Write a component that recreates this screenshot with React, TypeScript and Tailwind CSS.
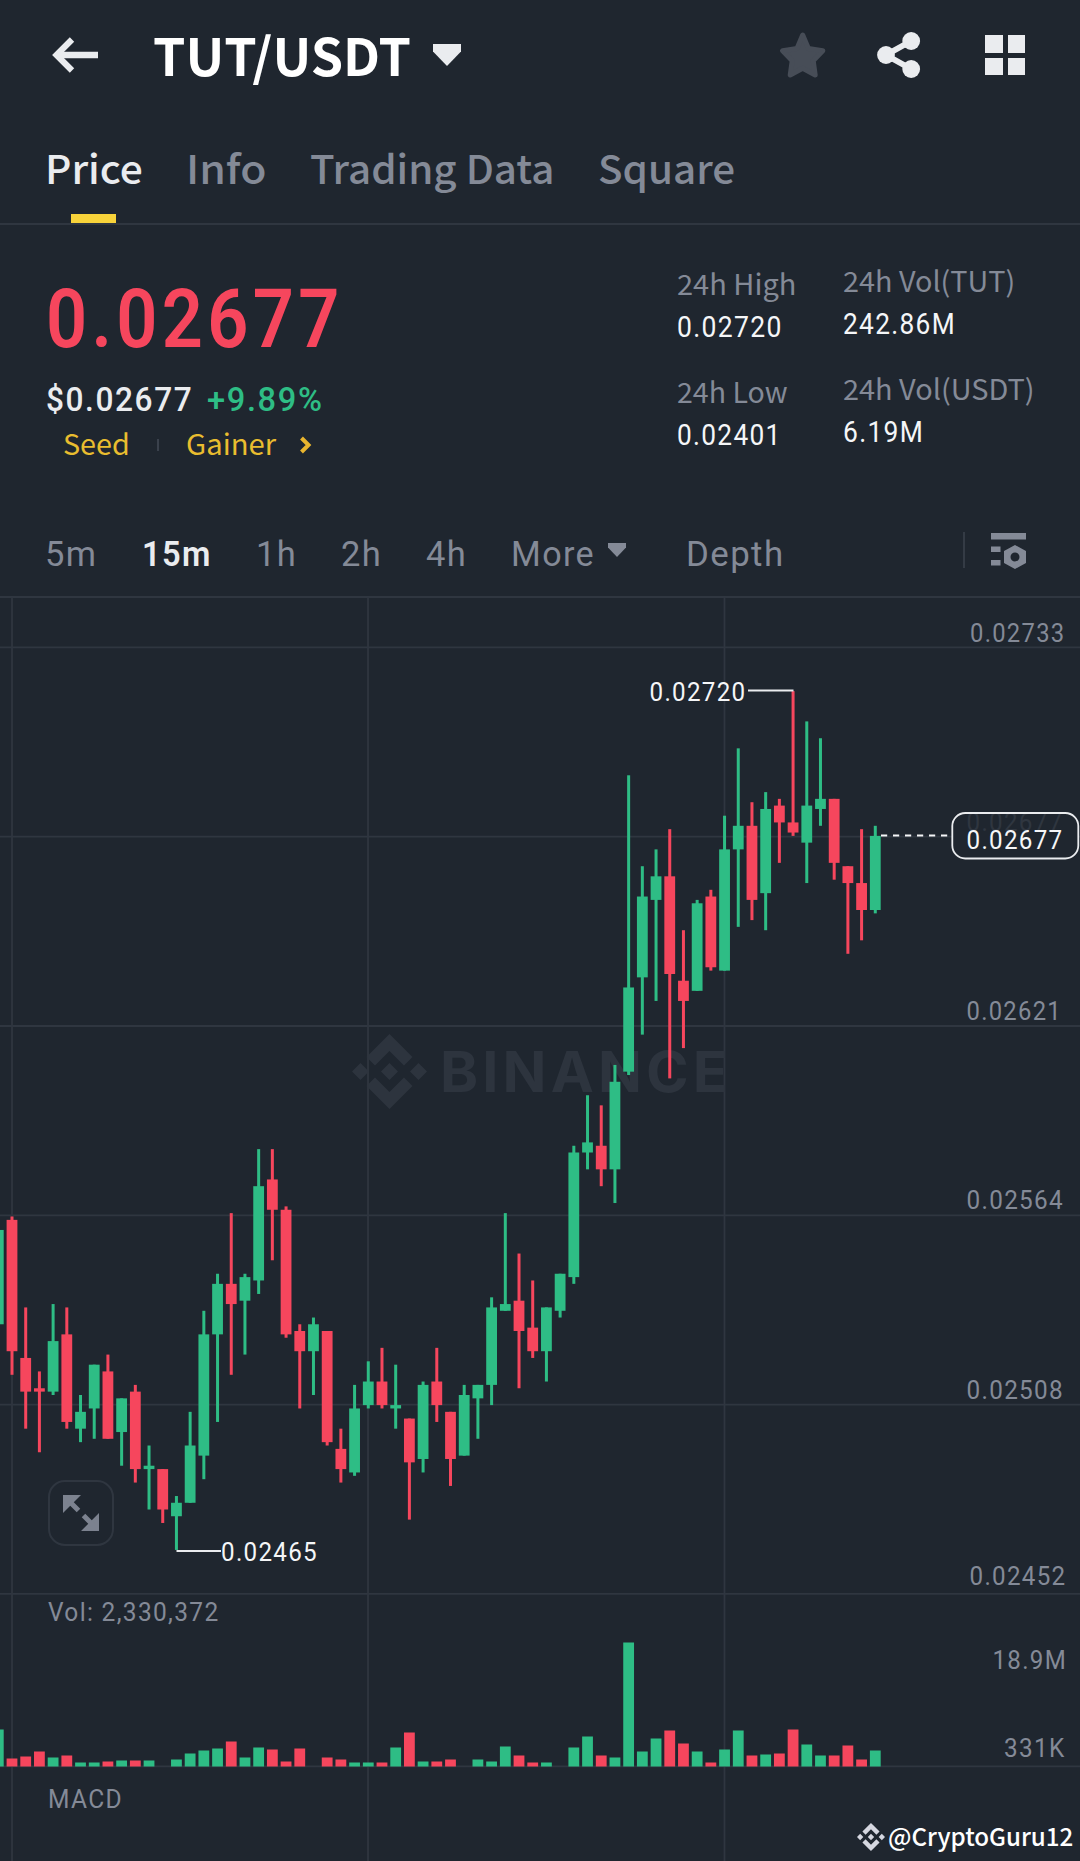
import { FC, ReactNode, useLayoutEffect, useRef, useState } from 'react';
import { SiBinance } from 'react-icons/si';

type Side = 'G' | 'R';
// side, high, body top, body bottom, low (price * 100000), volume bar height
type Candle = [Side, number, number, number, number, number];

const CANDLES: Candle[] = [
  ['G', 2560, 2560, 2532, 2532, 37],
  ['R', 2564, 2563, 2524, 2517, 8],
  ['R', 2537, 2522, 2512, 2501, 10],
  ['R', 2518, 2513, 2512, 2494, 15],
  ['G', 2538, 2527, 2512, 2511, 9],
  ['R', 2537, 2529, 2503, 2501, 11],
  ['G', 2511, 2506, 2501, 2497, 4],
  ['G', 2520, 2520, 2507, 2498, 4],
  ['R', 2523, 2518, 2498, 2498, 5],
  ['G', 2510, 2510, 2500, 2490, 6],
  ['R', 2514, 2512, 2489, 2485, 6],
  ['G', 2496, 2490, 2489, 2477, 6],
  ['R', 2489, 2489, 2477, 2473, 0],
  ['G', 2481, 2479, 2475, 2465, 7],
  ['G', 2506, 2496, 2479, 2479, 13],
  ['G', 2536, 2529, 2493, 2486, 16],
  ['G', 2547, 2544, 2529, 2503, 18],
  ['R', 2565, 2544, 2538, 2517, 25],
  ['G', 2547, 2546, 2539, 2523, 9],
  ['G', 2584, 2573, 2545, 2541, 19],
  ['R', 2584, 2575, 2566, 2551, 17],
  ['R', 2567, 2566, 2529, 2528, 5],
  ['R', 2532, 2530, 2524, 2507, 18],
  ['G', 2534, 2532, 2524, 2511, 0],
  ['R', 2530, 2530, 2497, 2496, 9],
  ['R', 2501, 2495, 2489, 2485, 7],
  ['G', 2514, 2507, 2488, 2487, 4],
  ['G', 2521, 2515, 2508, 2507, 4],
  ['R', 2525, 2515, 2508, 2507, 4],
  ['G', 2520, 2508, 2507, 2501, 19],
  ['R', 2504, 2504, 2491, 2474, 34],
  ['G', 2515, 2514, 2492, 2488, 5],
  ['R', 2525, 2515, 2508, 2503, 5],
  ['R', 2506, 2506, 2492, 2484, 7],
  ['G', 2514, 2511, 2493, 2493, 0],
  ['G', 2514, 2514, 2510, 2498, 7],
  ['G', 2540, 2537, 2514, 2508, 5],
  ['G', 2565, 2538, 2536, 2536, 20],
  ['R', 2553, 2539, 2530, 2513, 11],
  ['R', 2545, 2531, 2524, 2522, 4],
  ['G', 2537, 2537, 2524, 2515, 4],
  ['G', 2547, 2547, 2536, 2534, 0],
  ['G', 2585, 2583, 2546, 2544, 19],
  ['G', 2600, 2586, 2583, 2578, 30],
  ['R', 2597, 2585, 2578, 2573, 11],
  ['G', 2609, 2604, 2578, 2568, 9],
  ['G', 2695, 2632, 2607, 2606, 124],
  ['G', 2668, 2659, 2635, 2618, 15],
  ['G', 2673, 2665, 2658, 2628, 28],
  ['R', 2679, 2665, 2636, 2605, 36],
  ['R', 2649, 2634, 2628, 2614, 23],
  ['G', 2658, 2657, 2631, 2631, 15],
  ['R', 2661, 2659, 2638, 2637, 4],
  ['G', 2683, 2673, 2637, 2637, 17],
  ['G', 2703, 2680, 2673, 2650, 36],
  ['R', 2687, 2680, 2658, 2652, 11],
  ['G', 2690, 2685, 2660, 2649, 12],
  ['R', 2688, 2686, 2681, 2669, 13],
  ['R', 2720, 2681, 2678, 2677, 37],
  ['G', 2711, 2686, 2675, 2663, 22],
  ['G', 2706, 2688, 2685, 2680, 11],
  ['R', 2688, 2688, 2669, 2664, 11],
  ['R', 2668, 2668, 2663, 2642, 21],
  ['R', 2679, 2663, 2655, 2646, 7],
  ['G', 2680, 2677, 2655, 2654, 16],
];

const AXIS_LABELS = [
  { text: '0.02733', x: 970, y: 641.7, w: 95.5 },
  { text: '0.02621', x: 966.5, y: 1019.7, w: 95.5 },
  { text: '0.02564', x: 966.5, y: 1209, w: 97.5 },
  { text: '0.02508', x: 966.5, y: 1398.5, w: 97.5 },
  { text: '0.02452', x: 969.5, y: 1585, w: 97 },
  { text: '18.9M', x: 992.5, y: 1669, w: 74.5 },
  { text: '331K', x: 1004, y: 1757, w: 61.5 },
];

const GRID_X = [12, 368, 724.5];
const GRID_Y = [647.3, 836.7, 1026, 1215.3, 1404.7, 1593.8, 1766.3];
const COLORS = { G: '#2ebd85', R: '#f6465d' };
const VOLUME_BASE = 1766.5;

const candleX = (i: number) => 12 + (i - 1) * 13.703;
const priceY = (p: number) => 647.3 + (2733 - p) * 3.368;

interface FitTextProps {
  className: string;
  children: ReactNode;
}

// Squeezes a single line of text to the width of its box
const FitText: FC<FitTextProps> = ({ className, children }) => {
  const box = useRef<HTMLDivElement>(null);
  const text = useRef<HTMLSpanElement>(null);
  const [scale, setScale] = useState(1);

  useLayoutEffect(() => {
    if (box.current && text.current) {
      setScale(box.current.clientWidth / text.current.offsetWidth);
    }
  }, [children]);

  return (
    <div ref={box} className={`shrink-0 whitespace-nowrap leading-none ${className}`}>
      <span ref={text} className="block w-max origin-left" style={{ transform: `scaleX(${scale})` }}>
        {children}
      </span>
    </div>
  );
};

const Header: FC = () => (
  <header className="flex h-[110px] items-center pl-[52px]">
    <svg className="h-[36px] w-[46px] shrink-0" viewBox="0 0 46 36" fill="none" stroke="#eaecef">
      <path d="M4 18H46" strokeWidth="6.4" />
      <path d="M20 2.5L4.5 18L20 33.500" strokeWidth="6.2" />
    </svg>
    <FitText className="mb-[3px] ml-[55px] w-[258px] font-['Noto_Sans_CJK_SC'] text-[51.5px] font-bold text-white">TUT/USDT</FitText>
    <svg className="ml-[22px] h-[22px] w-[28px] shrink-0" viewBox="0 0 28 22" fill="#eaecef">
      <path d="M0 0H28V7.500L14 22L0 7.500Z" />
    </svg>
    <svg className="ml-[319px] h-[46px] w-[46px] shrink-0" viewBox="0 0 46 46" fill="#474d57" stroke="#474d57" strokeWidth="5" strokeLinejoin="round">
      <path d="M22.700 3L28.400 16.500L42.800 18.700L33.200 28.700L35.200 43L22.700 36.200L10.200 43L12.200 28.700L2.600 18.700L17 16.500Z" />
    </svg>
    <svg className="ml-[51px] h-[46px] w-[44px] shrink-0" viewBox="0 0 44 46" fill="#eaecef">
      <path d="M34.200 9L9 23L34.200 37" fill="none" stroke="#eaecef" strokeWidth="6" />
      <circle cx="34.200" cy="9" r="8.900" />
      <circle cx="9" cy="23" r="8.900" />
      <circle cx="34.200" cy="37" r="8.900" />
    </svg>
    <div className="ml-[64px] grid shrink-0 grid-cols-2 gap-[5px]">
      <div className="size-[17.5px] bg-[#eaecef]" />
      <div className="size-[17.5px] bg-[#eaecef]" />
      <div className="size-[17.5px] bg-[#eaecef]" />
      <div className="size-[17.5px] bg-[#eaecef]" />
    </div>
  </header>
);

const Tabs: FC = () => (
  <nav className="flex h-[115px] border-b-2 border-[#2f3640] pl-[45px] pt-[37px] font-['Noto_Sans_CJK_SC'] text-[39.5px] font-medium text-[#848a97]">
    <div className="flex flex-col items-center">
      <FitText className="w-[98px] text-[#eaecef]">Price</FitText>
      <div className="mr-[2px] mt-auto h-[9px] w-[45px] bg-[#f8d33a]" />
    </div>
    <FitText className="ml-[43px] w-[80px]">Info</FitText>
    <FitText className="ml-[44px] w-[245px]">Trading Data</FitText>
    <FitText className="ml-[43px] w-[137px]">Square</FitText>
  </nav>
);

const Ticker: FC = () => (
  <section className="flex h-[287px] pl-[46px] text-[#848a97]">
    <div className="w-[631px] pt-[53px]">
      <FitText className="w-[298px] text-[82px] font-semibold tracking-[0.06em] text-[#f6465d]">0.02677</FitText>
      <div className="mt-[22px] flex text-[34px] font-medium tracking-[0.05em]">
        <FitText className="w-[147px] text-[#eaecef]">$0.02677</FitText>
        <FitText className="ml-[14px] w-[117px] text-[#2ebd85]">+9.89%</FitText>
      </div>
      <div className="mt-[13px] flex pl-[17px] font-['Noto_Sans_CJK_SC'] text-[28.3px] text-[#e9bd2f]">
        <FitText className="w-[67px]">Seed</FitText>
        <div className="ml-[27px] mt-[10px] h-[12px] w-[2px] bg-[#3a414c]" />
        <FitText className="ml-[27px] w-[90px]">Gainer</FitText>
        <svg className="ml-[24px] mt-[7px] h-[18px] w-[12px]" viewBox="0 0 12 18" fill="none" stroke="#e9b52f" strokeWidth="4">
          <path d="M1.500 2L8.500 9L1.500 16" />
        </svg>
      </div>
    </div>
    <div className="w-[166px] pt-[44px]">
      <FitText className="w-[119px] font-['Noto_Sans_CJK_SC'] text-[28.3px]">24h High</FitText>
      <FitText className="mt-[15px] w-[106px] text-[30px] tracking-[0.05em] text-[#f5f6f8]">0.02720</FitText>
      <FitText className="mt-[35px] w-[111px] font-['Noto_Sans_CJK_SC'] text-[28.3px]">24h Low</FitText>
      <FitText className="mt-[14.500px] w-[105px] text-[30px] tracking-[0.05em] text-[#f5f6f8]">0.02401</FitText>
    </div>
    <div className="pt-[41px]">
      <FitText className="w-[172px] font-['Noto_Sans_CJK_SC'] text-[28.3px]">24h Vol(TUT)</FitText>
      <FitText className="mt-[15px] w-[113px] text-[30px] tracking-[0.05em] text-[#f5f6f8]">242.86M</FitText>
      <FitText className="mt-[35px] w-[192px] font-['Noto_Sans_CJK_SC'] text-[28.3px]">24h Vol(USDT)</FitText>
      <FitText className="mt-[14.500px] w-[81px] text-[30px] tracking-[0.05em] text-[#f5f6f8]">6.19M</FitText>
    </div>
  </section>
);

const IntervalBar: FC = () => (
  <div className="flex h-[84px] items-center pl-[45px] text-[34.5px] tracking-[0.04em] text-[#848a97]">
    <FitText className="w-[52px]">5m</FitText>
    <FitText className="ml-[45px] w-[70px] font-semibold text-[#eaecef]">15m</FitText>
    <FitText className="ml-[44px] w-[41px]">1h</FitText>
    <FitText className="ml-[44px] w-[41px]">2h</FitText>
    <FitText className="ml-[44px] w-[41px]">4h</FitText>
    <FitText className="ml-[44px] w-[84px]">More</FitText>
    <svg className="mb-[8px] ml-[13px] h-[14px] w-[18px] shrink-0" viewBox="0 0 18 14" fill="#848a97">
      <path d="M0 0H18V4.500L9 14L0 4.500Z" />
    </svg>
    <FitText className="ml-[60px] w-[99px]">Depth</FitText>
    <div className="mb-[8px] ml-[178px] h-[36px] w-[2px] shrink-0 bg-[#343b45]" />
    <svg className="mb-[6px] ml-[26px] h-[36px] w-[35px] shrink-0" viewBox="0 0 35 36" fill="#848a97">
      <path d="M0 0H35V6.500H0Z M0 13.500H9.500V19H0Z M0 27H9.500V32.500H0Z" />
      <path fillRule="evenodd" d="M24 12L35 18V30L24 36L13 30V18Z M24 19.500A4.500 4.500 0 1 0 24 28.500A4.500 4.500 0 1 0 24 19.500Z" />
    </svg>
  </div>
);

const Chart: FC = () => (
  <svg className="block h-[1265px] w-[1080px] font-[Roboto,sans-serif]" viewBox="0 596 1080 1265" fontSize="26" letterSpacing="1.4">
    <g stroke="#2f3640" strokeWidth="1.8">
      <path d="M0 597H1080" />
      {GRID_Y.map((y) => (
        <path key={y} d={`M0 ${y}H1080`} />
      ))}
      {GRID_X.map((x) => (
        <path key={x} d={`M${x} 597V1861`} />
      ))}
    </g>

    {/* Exchange watermark */}
    <g fill="#2d343e" color="#2d343e">
      <SiBinance x={352} y={1034} size={75} />
      <text x="440" y="1092" fontSize="56" fontWeight="700" letterSpacing="4" textLength="292" lengthAdjust="spacingAndGlyphs" className="font-[Inter]">
        BINANCE
      </text>
    </g>

    {CANDLES.map(([side, high, top, bottom, low, volume], i) => {
      const x = candleX(i);
      return (
        <g key={i} fill={COLORS[side]}>
          <rect x={x - 1.5} y={priceY(high)} width="3" height={priceY(low) - priceY(high)} />
          <rect x={x - 5.4} y={priceY(top)} width="10.8" height={priceY(bottom) - priceY(top)} />
          <rect x={x - 5.4} y={VOLUME_BASE - volume} width="10.8" height={volume} />
        </g>
      );
    })}

    {/* High / low markers */}
    <g fill="#f5f6f8" stroke="none">
      <path d="M748 690.500H793.500" stroke="#eaecef" strokeWidth="1.8" />
      <text x="649.500" y="701" textLength="97" lengthAdjust="spacingAndGlyphs">0.02720</text>
      <path d="M176.500 1551H221" stroke="#eaecef" strokeWidth="1.8" />
      <text x="221" y="1560.700" textLength="97" lengthAdjust="spacingAndGlyphs">0.02465</text>
    </g>

    {/* Last price */}
    <path d="M881 835.500H948" stroke="#f5f6f8" strokeWidth="1.8" strokeDasharray="6.200 5.800" />
    <rect x="952.300" y="813" width="126" height="45.500" rx="13" fill="#1f262f" />
    <text x="966.500" y="830.500" fill="#2f3640" textLength="97" lengthAdjust="spacingAndGlyphs">0.02677</text>
    <rect x="952.300" y="813" width="126" height="45.500" rx="13" fill="none" stroke="#eaecef" strokeWidth="1.8" />
    <text x="966.500" y="848.500" fill="#f5f6f8" textLength="97" lengthAdjust="spacingAndGlyphs">0.02677</text>

    <g fill="#848a97">
      {AXIS_LABELS.map(({ text, x, y, w }) => (
        <text key={text} x={x} y={y} textLength={w} lengthAdjust="spacingAndGlyphs">{text}</text>
      ))}
      <text x="48" y="1620.700" textLength="171.500" lengthAdjust="spacingAndGlyphs">Vol: 2,330,372</text>
      <text x="48" y="1807.700" textLength="75" lengthAdjust="spacingAndGlyphs">MACD</text>
    </g>
  </svg>
);

export default function App() {
  return (
    <div className="relative h-[1861px] w-[1080px] overflow-hidden bg-[#1f262f] font-[Roboto,sans-serif]">
      <Header />
      <Tabs />
      <Ticker />
      <IntervalBar />
      <Chart />

      <button className="absolute left-[48px] top-[1480px] flex size-[66px] items-center justify-center rounded-[17px] border-[2.5px] border-[#2f3640] bg-[#1f262f]">
        <svg className="size-[36px]" viewBox="0 0 36 36" fill="#7c828f" stroke="#7c828f">
          <path d="M0 0H18L0 18Z M36 36H18L36 18Z" stroke="none" />
          <path d="M6 6L15.500 15.500M20.500 20.500L30 30" strokeWidth="5" />
        </svg>
      </button>

      <div className="absolute bottom-[10px] left-[857px] flex items-center">
        <SiBinance className="size-[28px] text-[#d5d7e0]" />
        <FitText className="mb-[2px] ml-[3px] w-[185px] font-['Noto_Sans_CJK_SC'] text-[24.5px] font-medium text-white">@CryptoGuru12</FitText>
      </div>
    </div>
  );
}
